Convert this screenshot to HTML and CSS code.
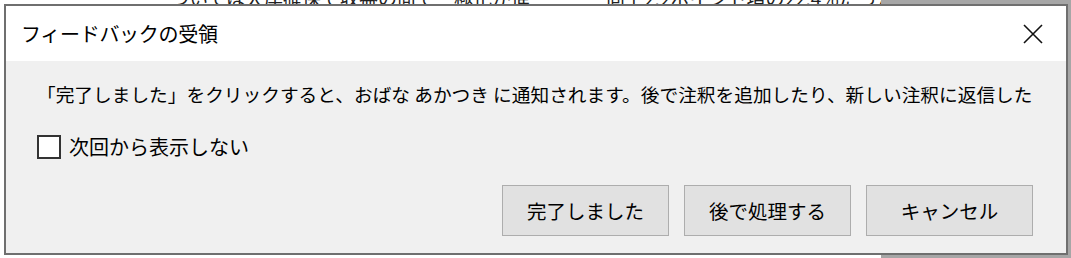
FILE: index.html
```html
<!DOCTYPE html>
<html lang="ja">
<head>
<meta charset="utf-8">
<link rel="stylesheet" href="styles.css">
</head>
<body>
<div class="page">
  <div class="doc">
    <div class="doc-line">ついては大岸確保で収益の面で三極化が進　　　　向上2.2ポイント増の22.4%だった。</div>
    <div class="doc-side"></div>
  </div>
  <div class="dialog">
    <div class="titlebar">
      <div class="title">フィードバックの受領</div>
      <svg class="close" width="20" height="20" viewBox="0 0 20 20"><path d="M1 1 L19 19 M19 1 L1 19" stroke="#111" stroke-width="1.6" fill="none"/></svg>
    </div>
    <div class="body">
      <p class="msg">「完了しました」をクリックすると、おばな あかつき に通知されます。後で注釈を追加したり、新しい注釈に返信した</p>
      <label class="check"><span class="box"></span><span>次回から表示しない</span></label>
      <div class="buttons">
        <button class="btn">完了しました</button>
        <button class="btn">後で処理する</button>
        <button class="btn">キャンセル</button>
      </div>
    </div>
  </div>
</div>
</body>
</html>
```
FILE: styles.css
```css
html, body { margin: 0; padding: 0; }
body {
  width: 1071px; height: 258px; overflow: hidden; background: #fff;
  font-family: "Noto Sans CJK JP", "Noto Sans", sans-serif;
}
.page { position: relative; width: 1071px; height: 258px; }
.doc { position: absolute; inset: 0; }
.doc-line {
  position: absolute; left: 170px; top: -16px; font-size: 19px; color: #222; white-space: nowrap;
}
.doc-side { position: absolute; right: 0; top: 0; width: 190px; height: 258px; background: #a6a6a6; }
.dialog {
  position: absolute; left: 4px; top: 4px; width: 1060px; height: 247px;
  border: 2px solid #6f6f6f; background: #f0f0f0; display: flex; flex-direction: column;
}
.titlebar {
  height: 55px; background: #fff; display: flex; align-items: center; justify-content: space-between;
  padding: 0 23px 0 15px;
}
.title { font-size: 20px; color: #000; letter-spacing: -0.3px; }
.close { width: 20px; height: 20px; }
.body { flex: 1; padding: 19px 33px 0 31px; display: flex; flex-direction: column; }
.msg { margin: 0; font-size: 18.7px; color: #000; white-space: nowrap; letter-spacing: 0; line-height: 28px; }
.check { display: flex; align-items: center; gap: 8px; margin-top: 24px; font-size: 20px; color: #000; }
.box { width: 20px; height: 20px; border: 2px solid #333; background: #fff; }
.buttons { display: flex; justify-content: flex-end; gap: 15px; margin-top: 24px; }
.btn {
  width: 167px; height: 51px; background: #e1e1e1; border: 1px solid #adadad;
  font-family: inherit; font-size: 19.5px; color: #000; padding: 0;
}
```
